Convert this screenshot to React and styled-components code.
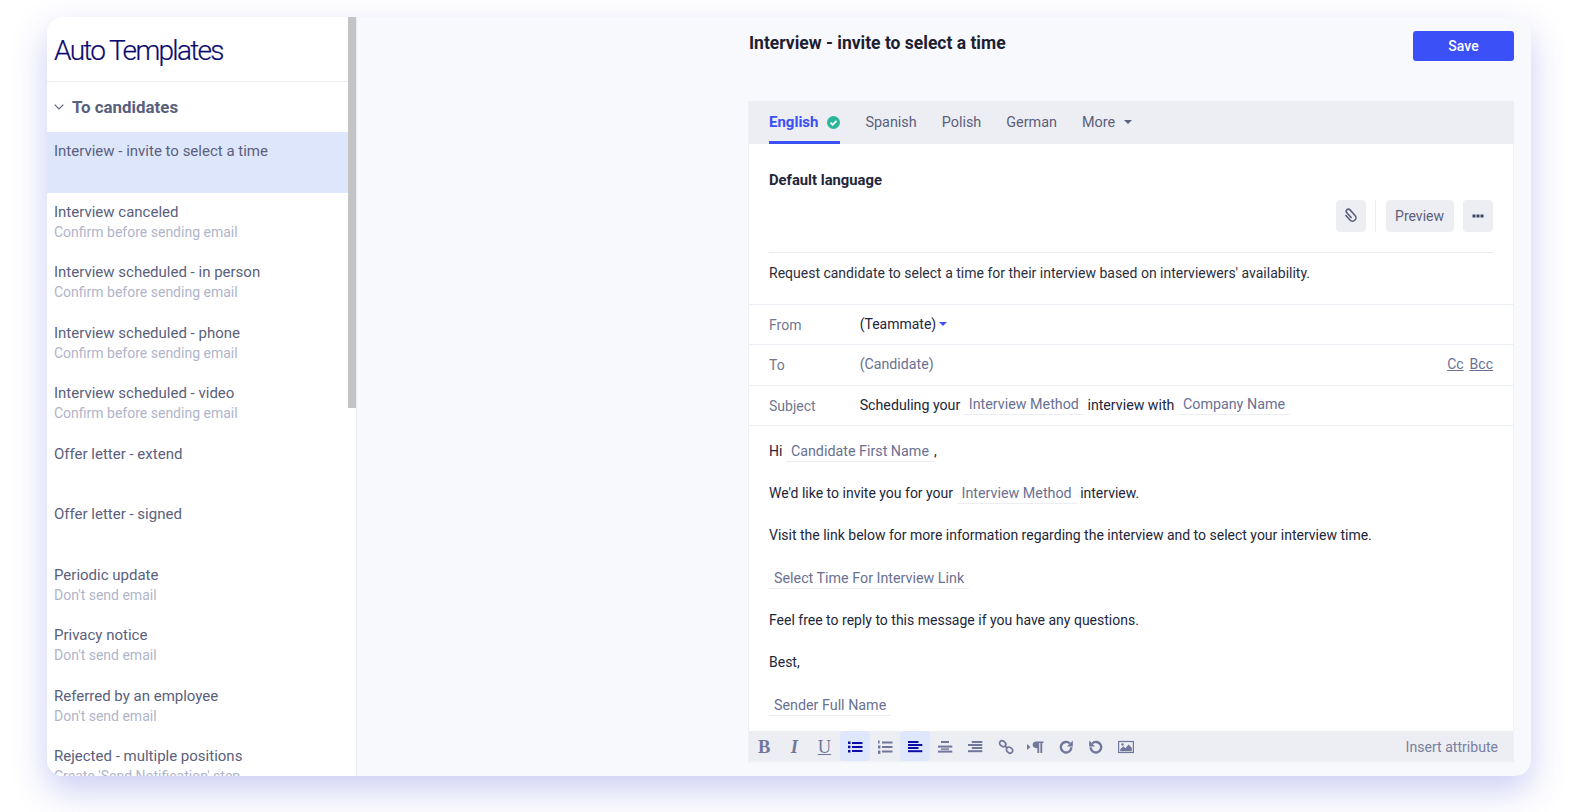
import React from 'react';
import styled, { createGlobalStyle } from 'styled-components';

const Global = createGlobalStyle`
  html, body { margin: 0; padding: 0; background: #fff; }
  body { font-family: Roboto, "Liberation Sans", sans-serif; overflow: hidden; }
  * { box-sizing: border-box; }
`;
const Page = styled.div`width: 1578px; height: 812px; padding: 17px 47px 36px 47px;`;
const Card = styled.div`
  display: flex; height: 759px; border-radius: 16px; overflow: hidden; background: #f8f9fc;
  box-shadow: 0 14px 35px rgba(70, 75, 215, 0.28);
`;
const Sidebar = styled.aside`
  width: 310px; flex: none; background: #fff; border-right: 1px solid #e9ebf3; position: relative; overflow: hidden;
`;
const ScrollThumb = styled.div`position: absolute; right: 0; top: 0; width: 8px; height: 391px; background: #c4c4c6;`;
const SideHead = styled.div`height: 65px; padding: 14px 0 0 7px; border-bottom: 1px solid #eceef3;`;
const Logo = styled.h1`
  margin: 0; font: 300 28px/40px Roboto, sans-serif; letter-spacing: -1.7px; color: #0c0a6e;
  -webkit-text-stroke: 0.2px #0c0a6e;
`;
const Group = styled.div`display: flex; align-items: center; height: 50px; padding: 0 0 1px 7px; gap: 8px;`;
const GroupTitle = styled.span`font-size: 16.9px; font-weight: 700; color: #59607e;`;
const Item = styled.div`
  height: 60.5px; padding: 9px 7px 0; background: ${p => (p.$active ? '#dee6fc' : 'transparent')};
`;
const ItemTitle = styled.div`font-size: 15px; line-height: 20px; color: #5a607c;`;
const ItemSub = styled.div`font-size: 14px; line-height: 20px; color: #b0b5ca;`;
const Main = styled.main`flex: 1; display: flex; justify-content: flex-end; padding: 14px 17px 0 0;`;
const Column = styled.div`width: 766px;`;
const TitleRow = styled.div`display: flex; justify-content: space-between; height: 70px; padding-left: 1px;`;
const PageTitle = styled.h2`margin: 0; font-size: 17.5px; font-weight: 700; line-height: 24px; color: #1d2030;`;
const Save = styled.button`
  width: 101px; height: 30px; border: 0; border-radius: 3px; background: #3b50f6; color: #fff;
  font: 500 14px Roboto, sans-serif;
`;
const Editor = styled.section`
  background: #fff; border-right: 1px solid #eef0f5; border-left: 1px solid #eef0f5; height: 662px; display: flex; flex-direction: column;
`;
const Tabs = styled.div`display: flex; flex: none; height: 43px; background: #edeef3; padding-left: 20px; margin: 0 -1px 0 0; gap: 25px;`;
const Tab = styled.div`
  display: flex; align-items: center; gap: 9px; height: 43px; padding-top: 2px;
  font-size: ${p => (p.$active ? 15 : 14.4)}px;
  color: ${p => (p.$active ? '#3b50f6' : '#5a607c')}; font-weight: ${p => (p.$active ? 700 : 400)};
  border-bottom: 3px solid ${p => (p.$active ? '#3b50f6' : 'transparent')};
`;
const Caret = styled.i`
  display: inline-block; width: 0; height: 0; border: 4px solid transparent; border-top-color: ${p => p.$c || '#5a607c'};
  border-bottom: 0; margin-left: ${p => p.$ml || 0}px;
`;
const Section = styled.div`padding: 0 20px;`;
const Strong = styled.div`font-size: 14.8px; font-weight: 700; color: #23263a; padding-top: 26px; line-height: 20px;`;
const Actions = styled.div`display: flex; justify-content: flex-end; align-items: stretch; margin-top: 10px; height: 32px; gap: 9.5px;`;
const GhostBtn = styled.button`
  border: 0; border-radius: 4px; background: #edeef3; color: #5a607c; font: 400 14px Roboto, sans-serif;
  min-width: 30px; padding: 0 ${p => (p.$wide ? 9.5 : 0)}px 1px; display: flex; align-items: center; justify-content: center;
`;
const VSep = styled.div`width: 1px; background: #eceef3;`;
const Desc = styled.div`
  margin-top: 20px; border-top: 1px solid #e9ebf0; padding-top: 10px; height: 52px; font-size: 14px; line-height: 20px; color: #2b2e40;
`;
const Row = styled.div`
  display: flex; align-items: center; flex: none; height: 40.3px; border-top: 1px solid #eceef4; padding: 0 20px 1.5px; font-size: 14px; color: #23263a;
  white-space: pre;
`;
const SubjectRow = styled(Row)`font-size: 14.2px; padding-bottom: 0;`;
const RowLabel = styled.span`width: 90.7px; flex: none; color: #70778f; padding-top: 2px; font-size: 14px;`;
const Muted = styled.span`color: #6a7192; font-size: 14.2px;`;
const Right = styled.span`margin-left: auto; display: flex; gap: 6px; color: #6a7192; text-decoration: underline;`;
const Attr = styled.span`
  color: #6a7192; font-size: 14.3px; border-bottom: 1px solid #eceef4; padding: 0 5px; display: inline-block; line-height: 19px;
`;
const Body = styled.div`flex: 1; min-height: 0; overflow: hidden; border-top: 1px solid #eceef4; padding: 15px 20px 0; font-size: 14px; color: #23263a;`;
const Para = styled.div`height: 42.3px; line-height: 20px;`;
const Toolbar = styled.div`
  display: flex; align-items: flex-start; flex: none; height: 32px; background: #edeef3; border-bottom: 2px solid #f3f4f7;
`;
const Tool = styled.div`
  width: 30.2px; height: 30px; padding-top: 1px; display: flex; align-items: center; justify-content: center; border-radius: 4px;
  background: ${p => (p.$on ? '#dfe7fd' : 'transparent')}; color: ${p => (p.$on ? '#0c0ca8' : '#70779a')};
`;
const SerifGlyph = styled.span`
  font: ${p => p.$s || 'normal'} ${p => p.$w || 700} 18.5px/20px "Liberation Serif", serif; color: #70779a;
  text-decoration: ${p => (p.$u ? 'underline' : 'none')};
`;
const Insert = styled.span`margin-left: auto; padding: 6px 15px 0 0; font-size: 14.1px; line-height: 20px; color: #7a809e;`;

const Svg = ({ children }) => (
  <svg width="16" height="16" viewBox="0 0 16 16" fill="currentColor">{children}</svg>
);
const I = {
  ul: <Svg><rect x="1" y="2.5" width="2.5" height="2.5"/><rect x="1" y="6.7" width="2.5" height="2.5"/><rect x="1" y="11" width="2.5" height="2.5"/><rect x="5" y="3" width="10.5" height="2"/><rect x="5" y="7" width="10.5" height="2"/><rect x="5" y="11" width="10.5" height="2"/></Svg>,
  ol: <Svg><rect x="1" y="1.5" width="1.6" height="3"/><rect x="1" y="6.5" width="2.4" height="3"/><rect x="1" y="11.5" width="2.4" height="3.4"/><rect x="5" y="2.5" width="10.5" height="2"/><rect x="5" y="7" width="10.5" height="2"/><rect x="5" y="11.5" width="10.5" height="2"/></Svg>,
  left: <Svg><rect x="1" y="2" width="10.5" height="2"/><rect x="1" y="5" width="14.3" height="2"/><rect x="1" y="8" width="10.5" height="2"/><rect x="1" y="11.2" width="14.3" height="2"/></Svg>,
  center: <Svg><rect x="4" y="2" width="8" height="2"/><rect x="1" y="6.6" width="14.3" height="2"/><rect x="4" y="9.4" width="8" height="1.4"/><rect x="1" y="11.6" width="14.3" height="2"/></Svg>,
  right: <Svg><rect x="4.8" y="2" width="10.5" height="2"/><rect x="1" y="5" width="14.3" height="2"/><rect x="4.8" y="8" width="10.5" height="2"/><rect x="1" y="11.2" width="14.3" height="2"/></Svg>,
  link: <Svg><g fill="none" stroke="currentColor" strokeWidth="1.7"><rect x="1.4" y="2.2" width="6.6" height="5" rx="2.5" transform="rotate(40 4.7 4.7)"/><rect x="8.2" y="8.6" width="6.6" height="5" rx="2.5" transform="rotate(40 11.5 11.1)"/><path d="M6.6 6.6l3 2.8"/></g></Svg>,
  para: <svg width="17" height="16" viewBox="0 0 17 16" fill="currentColor"><path d="M0 5l3.5 3L0 11z"/><path d="M9.5 2.4h7v1.7h-1.3V14h-1.8V4.1h-1.2V14h-1.8V9.2C7.6 9.2 5.6 8 5.6 5.8s1.7-3.4 3.9-3.4z"/></svg>,
  redo: <Svg><path d="M13.4 8.2a5.3 5.3 0 1 1-1.7-3.9" fill="none" stroke="currentColor" strokeWidth="2.4"/><path d="M14.8 1.6v5.8H9z"/></Svg>,
  undo: <Svg><path d="M2.6 8.2a5.3 5.3 0 1 0 1.7-3.9" fill="none" stroke="currentColor" strokeWidth="2.4"/><path d="M1.2 1.6v5.8H7z"/></Svg>,
  image: <Svg><rect x="0.6" y="2.5" width="14.8" height="11" fill="none" stroke="currentColor" strokeWidth="1.2"/><path d="M2.2 12.2v-2l3.2-3 2 2 3.2-3.7 3.2 3.2v3.5z"/><circle cx="4.5" cy="5.4" r="1.2"/></Svg>,
  clip: <svg width="15" height="15" viewBox="0 0 14 14" fill="none" stroke="#5a607c" strokeWidth="1.5"><g transform="rotate(-42 7 7)"><path d="M3.8 3.6v6.2a3.2 3.2 0 0 0 6.4 0V2.8a2 2 0 0 0-4 0v6.6"/></g></svg>,
  dots: <svg width="12" height="4" viewBox="0 0 12 4" fill="#3f4560"><rect x="0.5" y="0.5" width="3" height="3"/><rect x="4.5" y="0.5" width="3" height="3"/><rect x="8.5" y="0.5" width="3" height="3"/></svg>,
  check: <svg width="13" height="13" viewBox="0 0 13 13"><circle cx="6.5" cy="6.5" r="6.5" fill="#2cb59a"/><path d="M3.5 6.7l2.1 2.1 3.9-4" fill="none" stroke="#fff" strokeWidth="1.8"/></svg>,
  chev: <svg width="10" height="6" viewBox="0 0 10 6" fill="none" stroke="#59607e" strokeWidth="1.1"><path d="M.7.7 5 5 9.3.7"/></svg>,
};

const items = [
  ['Interview - invite to select a time', ''],
  ['Interview canceled', 'Confirm before sending email'],
  ['Interview scheduled - in person', 'Confirm before sending email'],
  ['Interview scheduled - phone', 'Confirm before sending email'],
  ['Interview scheduled - video', 'Confirm before sending email'],
  ['Offer letter - extend', ''],
  ['Offer letter - signed', ''],
  ['Periodic update', "Don't send email"],
  ['Privacy notice', "Don't send email"],
  ['Referred by an employee', "Don't send email"],
  ['Rejected - multiple positions', "Create 'Send Notification' step"],
];

export default function App() {
  return (
    <Page>
      <Global />
      <Card>
        <Sidebar>
          <SideHead><Logo>Auto Templates</Logo></SideHead>
          <Group>{I.chev}<GroupTitle>To candidates</GroupTitle></Group>
          {items.map(([t, s], i) => (
            <Item key={t} $active={i === 0}>
              <ItemTitle>{t}</ItemTitle>
              {s && <ItemSub>{s}</ItemSub>}
            </Item>
          ))}
          <ScrollThumb />
        </Sidebar>
        <Main>
          <Column>
            <TitleRow>
              <PageTitle>Interview - invite to select a time</PageTitle>
              <Save>Save</Save>
            </TitleRow>
            <Editor>
              <Tabs>
                <Tab $active>English {I.check}</Tab>
                <Tab>Spanish</Tab>
                <Tab>Polish</Tab>
                <Tab>German</Tab>
                <Tab>More <Caret /></Tab>
              </Tabs>
              <Section>
                <Strong>Default language</Strong>
                <Actions>
                  <GhostBtn aria-label="Attach">{I.clip}</GhostBtn>
                  <VSep />
                  <GhostBtn $wide>Preview</GhostBtn>
                  <GhostBtn aria-label="More">{I.dots}</GhostBtn>
                </Actions>
                <Desc>Request candidate to select a time for their interview based on interviewers' availability.</Desc>
              </Section>
              <Row><RowLabel>From</RowLabel>(Teammate)<Caret $c="#3b50f6" $ml={3} /></Row>
              <Row><RowLabel>To</RowLabel><Muted>(Candidate)</Muted><Right><span>Cc</span><span>Bcc</span></Right></Row>
              <SubjectRow><RowLabel>Subject</RowLabel>Scheduling your <Attr>Interview Method</Attr> interview with <Attr>Company Name</Attr></SubjectRow>
              <Body>
                <Para>Hi <Attr>Candidate First Name</Attr>,</Para>
                <Para>We'd like to invite you for your <Attr>Interview Method</Attr> interview.</Para>
                <Para>Visit the link below for more information regarding the interview and to select your interview time.</Para>
                <Para><Attr>Select Time For Interview Link</Attr></Para>
                <Para>Feel free to reply to this message if you have any questions.</Para>
                <Para>Best,</Para>
                <Para><Attr>Sender Full Name</Attr></Para>
              </Body>
              <Toolbar>
                <Tool><SerifGlyph>B</SerifGlyph></Tool>
                <Tool><SerifGlyph $s="italic">I</SerifGlyph></Tool>
                <Tool><SerifGlyph $w={400} $u>U</SerifGlyph></Tool>
                <Tool $on>{I.ul}</Tool>
                <Tool>{I.ol}</Tool>
                <Tool $on>{I.left}</Tool>
                <Tool>{I.center}</Tool>
                <Tool>{I.right}</Tool>
                <Tool>{I.link}</Tool>
                <Tool>{I.para}</Tool>
                <Tool>{I.redo}</Tool>
                <Tool>{I.undo}</Tool>
                <Tool>{I.image}</Tool>
                <Insert>Insert attribute</Insert>
              </Toolbar>
            </Editor>
          </Column>
        </Main>
      </Card>
    </Page>
  );
}
